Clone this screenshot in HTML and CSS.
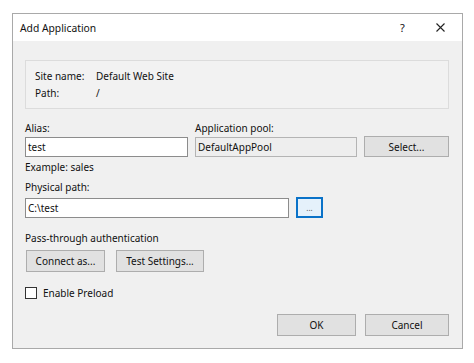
FILE: index.html
```html
<!DOCTYPE html>
<html lang="en">
<head>
    <meta charset="UTF-8">
    <title>Add Application</title>
    <link rel="stylesheet" href="styles.css">
</head>
<body>
    <div class="dialog">
        <div class="titlebar">
            <span class="title">Add Application</span>
            <span class="help">?</span>
            <span class="close">
                <svg width="9" height="9" viewBox="0 0 9 9"><path d="M0.5 0.5 L8.5 8.5 M8.5 0.5 L0.5 8.5" stroke="#222" stroke-width="1.1" fill="none"/></svg>
            </span>
        </div>
        <div class="content">
            <div class="site-info">
                <div class="info-row"><span class="info-label">Site name:</span><span>Default Web Site</span></div>
                <div class="info-row"><span class="info-label">Path:</span><span>/</span></div>
            </div>

            <div class="alias-grid">
                <label class="field-label">Alias:</label>
                <label class="field-label">Application pool:</label>
                <span></span>
                <div class="textbox">test</div>
                <div class="textbox readonly">DefaultAppPool</div>
                <button class="btn select">Select...</button>
                <span class="hint">Example: sales</span>
            </div>

            <label class="field-label path-label">Physical path:</label>
            <div class="path-row">
                <div class="textbox path-box">C:\test</div>
                <button class="btn browse">...</button>
            </div>

            <div class="section-label">Pass-through authentication</div>
            <div class="auth-row">
                <button class="btn connect">Connect as...</button>
                <button class="btn test">Test Settings...</button>
            </div>

            <div class="check-row">
                <span class="checkbox"></span>
                <span>Enable Preload</span>
            </div>

            <div class="footer">
                <button class="btn ok">OK</button>
                <button class="btn cancel">Cancel</button>
            </div>
        </div>
    </div>
</body>
</html>
```

FILE: styles.css
```css
* {
    margin: 0;
    padding: 0;
    box-sizing: border-box;
}

body {
    background-color: white;
    font-family: "Noto Sans", "Open Sans", sans-serif;
    font-size: 10px;
    color: #111;
}

.dialog {
    margin: 13px 0 0 12px;
    width: 451px;
    height: 336px;
    border: 1px solid #a9a9a9;
    background-color: #f0f0f0;
    display: flex;
    flex-direction: column;
}

.titlebar {
    height: 27px;
    background-color: white;
    display: flex;
    align-items: center;
    padding-left: 7px;
}

.title {
    flex: 1;
    font-size: 10.3px;
}

.help {
    width: 10px;
    margin-right: 26px;
    font-size: 11px;
}

.close {
    width: 9px;
    margin-right: 17px;
    display: flex;
}

.content {
    flex: 1;
    padding: 19px 13px 12px 12px;
    display: flex;
    flex-direction: column;
}

.site-info {
    border: 1px solid #dcdcdc;
    background-color: #f2f2f2;
    height: 49px;
    padding: 7px 9px;
}

.info-row {
    display: flex;
    line-height: 17px;
}

.info-label {
    width: 61px;
}

.alias-grid {
    display: grid;
    grid-template-columns: 163px 162px 85px;
    column-gap: 7px;
    margin-top: 11px;
    align-items: center;
}

.field-label {
    line-height: 16px;
    display: block;
}

.textbox {
    height: 20px;
    border: 1px solid #8c8c8c;
    background-color: white;
    line-height: 18px;
    padding-left: 2px;
}

.textbox.readonly {
    background-color: #eeeeee;
    border-color: #b4b4b4;
}

.btn {
    font-family: inherit;
    font-size: 10px;
    color: #111;
    background-color: #e1e1e1;
    border: 1px solid #adadad;
    height: 22px;
}

.select {
    height: 21px;
}

.hint {
    grid-column: 1 / 4;
    line-height: 16px;
    margin-top: 2px;
}

.path-label {
    margin-top: 4px;
}

.path-row {
    display: flex;
    gap: 7px;
    margin-top: 2px;
    align-items: center;
}

.path-box {
    width: 264px;
}

.browse {
    width: 27px;
    height: 21px;
    border: 2px solid #0a72c8;
    background-color: #e5f1fb;
    font-size: 8px;
    color: #555;
}

.section-label {
    margin-top: 12px;
    line-height: 16px;
}

.auth-row {
    display: flex;
    gap: 11px;
    margin-top: 4px;
    padding-left: 1px;
}

.connect {
    width: 79px;
}

.test {
    width: 88px;
}

.check-row {
    display: flex;
    align-items: center;
    gap: 6px;
    margin-top: 14px;
}

.checkbox {
    width: 12px;
    height: 12px;
    border: 1px solid #333;
    background-color: white;
}

.footer {
    display: flex;
    justify-content: flex-end;
    gap: 9px;
    margin-top: auto;
}

.ok {
    width: 79px;
}

.cancel {
    width: 84px;
}
```
